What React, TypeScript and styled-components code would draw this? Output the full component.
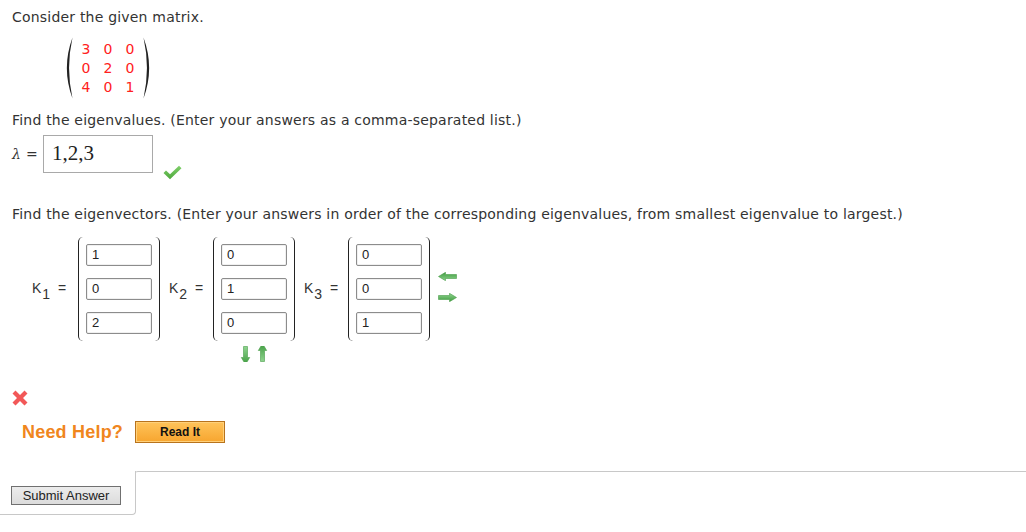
import React from "react";
import styled, { createGlobalStyle } from "styled-components";

const GlobalStyle = createGlobalStyle`
  html, body {
    margin: 0;
    padding: 0;
    background: #ffffff;
  }
  body {
    font-family: Verdana, "DejaVu Sans", sans-serif;
    font-size: 14px;
    letter-spacing: 0.2px;
    color: #333333;
  }
`;

const Page = styled.div`
  width: 1026px;
  height: 532px;
  overflow: hidden;
  position: relative;
`;

const Question = styled.div`
  padding: 9px 0 0 12px;
`;

const Prompt = styled.p<{ $top: number }>`
  margin: ${(p) => p.$top}px 0 0 0;
  line-height: 16px;
  white-space: nowrap;
`;

const MatrixWrap = styled.div`
  display: flex;
  align-items: stretch;
  margin: 12px 0 0 50px;
  height: 62px;
`;

const MatrixGrid = styled.div`
  display: grid;
  grid-template-columns: repeat(3, 22px);
  grid-auto-rows: 19px;
  align-content: center;
  padding: 0 1px;
`;

const Cell = styled.span`
  color: #ff2020;
  font-size: 14px;
  letter-spacing: 0;
  text-align: center;
  line-height: 19px;
`;

const AnswerRow = styled.div`
  display: flex;
  align-items: flex-end;
  margin-top: 7px;
`;

const Lambda = styled.span`
  font-family: "DejaVu Serif", "Liberation Serif", serif;
  font-style: italic;
  margin-right: 5px;
  line-height: 38px;
`;

const Eq = styled.span`
  margin-right: 5px;
  line-height: 38px;
`;

const BigInput = styled.div`
  width: 110px;
  height: 38px;
  box-sizing: border-box;
  border: 1px solid #a9a9a9;
  font-family: "Liberation Serif", "DejaVu Serif", serif;
  font-size: 21px;
  letter-spacing: 0;
  color: #222;
  line-height: 34px;
  padding-left: 8px;
`;

const CheckMark = styled.svg`
  margin: 0 0 -7px 10px;
`;

const VectorRow = styled.div`
  display: flex;
  align-items: flex-start;
  margin-top: 15px;
  padding-left: 20px;
`;

const VectorGroup = styled.div`
  display: flex;
  align-items: flex-start;
  margin-right: 9px;
`;

const KLabel = styled.span<{ $w: number }>`
  font-family: Arial, "Liberation Sans", sans-serif;
  font-size: 14px;
  letter-spacing: 0;
  width: ${(p) => p.$w}px;
  line-height: 102px;
  white-space: nowrap;
  color: #333;
  sub {
    font-size: 14px;
    vertical-align: -6px;
    line-height: 0;
    margin-left: 1px;
  }
`;

const VectorCol = styled.div`
  display: flex;
  flex-direction: column;
  align-items: center;
`;

const Bracketed = styled.div`
  display: flex;
  align-items: stretch;
  height: 104px;
`;

const Bracket = styled.span<{ $side: "left" | "right" }>`
  width: 4px;
  border-${(p) => p.$side}: 1.5px solid #222;
  border-radius: ${(p) => (p.$side === "left" ? "6px 0 0 6px" : "0 6px 6px 0")};
`;

const Cells = styled.div`
  display: flex;
  flex-direction: column;
  justify-content: space-between;
  padding: 7px 3px 7px;
`;

const SmallInput = styled.div`
  width: 66px;
  height: 22px;
  box-sizing: border-box;
  border: 1px solid #8c8c8c;
  border-radius: 2px;
  box-shadow: inset 0 0 0 1px #f0f0f0;
  font-family: Arial, "Liberation Sans", sans-serif;
  font-size: 13px;
  letter-spacing: 0;
  line-height: 20px;
  padding-left: 5px;
  color: #222;
`;

const SideArrows = styled.div`
  display: flex;
  flex-direction: column;
  gap: 12px;
  margin: 35px 0 0 8px;
`;

const UpDown = styled.div`
  display: flex;
  gap: 6px;
  margin-top: 5px;
`;

const Cross = styled.svg`
  display: block;
  margin: 28px 0 0 12px;
`;

const HelpRow = styled.div`
  display: flex;
  align-items: center;
  margin: 15px 0 0 22px;
`;

const NeedHelp = styled.span`
  font-family: Arial, "Liberation Sans", sans-serif;
  font-weight: bold;
  font-size: 18px;
  color: #f0861e;
  margin-right: 12px;
`;

const ReadIt = styled.button`
  width: 90px;
  height: 22px;
  background: linear-gradient(#ffc35a, #f7a52f);
  border: 1px solid #b8731c;
  box-shadow: inset 0 0 0 1px #ffd07a;
  font-family: Arial, "Liberation Sans", sans-serif;
  font-weight: bold;
  font-size: 12px;
  color: #111;
  padding: 0;
`;

const Footer = styled.div`
  position: absolute;
  left: 0;
  right: 0;
  top: 471px;
  display: flex;
`;

const FooterLeft = styled.div`
  width: 136px;
  height: 44px;
  box-sizing: border-box;
  border-right: 1px solid #c8c8c8;
  border-bottom: 1px solid #c8c8c8;
  border-bottom-right-radius: 4px;
  padding: 15px 0 0 11px;
`;

const FooterRight = styled.div`
  flex: 1;
  border-top: 1px solid #c8c8c8;
  border-top-left-radius: 3px;
  margin-left: -1px;
`;

const SubmitButton = styled.button`
  width: 110px;
  height: 19px;
  padding: 0;
  background: linear-gradient(#ececec, #dcdcdc);
  border: 1px solid #707070;
  font-family: Arial, "Liberation Sans", sans-serif;
  font-size: 13px;
  color: #222;
  line-height: 17px;
`;

const Paren = ({ side }: { side: "left" | "right" }) => (
  <svg width="12" height="62" viewBox="0 0 12 62">
    {side === "left" ? (
      <path d="M10.5 0.5 Q-0.8 31 10.5 61.5 Q3.6 31 10.5 0.5 Z" fill="#222" />
    ) : (
      <path d="M1.5 0.5 Q12.8 31 1.5 61.5 Q8.4 31 1.5 0.5 Z" fill="#222" />
    )}
  </svg>
);

const Arrow = ({ dir }: { dir: "left" | "right" | "up" | "down" }) => {
  const horiz = dir === "left" || dir === "right";
  const rot = { right: 0, down: 90, left: 180, up: 270 }[dir];
  return (
    <svg width={horiz ? 19 : 11} height={horiz ? 9 : 16} viewBox={horiz ? "0 0 19 9" : "0 0 11 16"}>
      <defs>
        <linearGradient id={`g-${dir}`} x1="0" y1="0" x2={horiz ? "0" : "1"} y2={horiz ? "1" : "0"}>
          <stop offset="0" stopColor="#8fd48f" />
          <stop offset="1" stopColor="#3f9b3f" />
        </linearGradient>
      </defs>
      <g transform={horiz ? `rotate(${rot} 9.5 4.5)` : `translate(5.5 8) rotate(${rot}) translate(-8 -4.5)`}>
        <path d="M0.5 2.5 H11.5 V0.3 L18.5 4.5 L11.5 8.7 V6.5 H0.5 Z" fill={`url(#g-${dir})`} stroke="#4a9e4a" strokeWidth="0.6" />
      </g>
    </svg>
  );
};

const vectors = [
  { label: "1", values: ["1", "0", "2"], w: 46 },
  { label: "2", values: ["0", "1", "0"], w: 44 },
  { label: "3", values: ["0", "0", "1"], w: 44 },
];

export default function App() {
  return (
    <Page>
      <GlobalStyle />
      <Question>
        <Prompt $top={0}>Consider the given matrix.</Prompt>
        <MatrixWrap>
          <Paren side="left" />
          <MatrixGrid>
            {["3", "0", "0", "0", "2", "0", "4", "0", "1"].map((v, i) => (
              <Cell key={i}>{v}</Cell>
            ))}
          </MatrixGrid>
          <Paren side="right" />
        </MatrixWrap>
        <Prompt $top={13}>Find the eigenvalues. (Enter your answers as a comma-separated list.)</Prompt>
        <AnswerRow>
          <Lambda>λ</Lambda>
          <Eq>=</Eq>
          <BigInput>1,2,3</BigInput>
          <CheckMark width="19" height="15" viewBox="0 0 19 15">
            <defs>
              <linearGradient id="chk" x1="0" y1="0" x2="0" y2="1">
                <stop offset="0" stopColor="#7fcf6a" />
                <stop offset="1" stopColor="#4ea83c" />
              </linearGradient>
            </defs>
            <path d="M0.5 8 L3 5.5 L7 9.2 L16 0.8 L18.5 3.3 L7 14.3 Z" fill="url(#chk)" />
          </CheckMark>
        </AnswerRow>
        <Prompt $top={33}>
          Find the eigenvectors. (Enter your answers in order of the corresponding eigenvalues, from smallest
          eigenvalue to largest.)
        </Prompt>
        <VectorRow>
          {vectors.map((v, idx) => (
            <VectorGroup key={v.label}>
              <KLabel $w={v.w}>
                K<sub>{v.label}</sub>&nbsp;&nbsp;=
              </KLabel>
              <VectorCol>
                <Bracketed>
                  <Bracket $side="left" />
                  <Cells>
                    {v.values.map((c, i) => (
                      <SmallInput key={i}>{c}</SmallInput>
                    ))}
                  </Cells>
                  <Bracket $side="right" />
                </Bracketed>
                {idx === 1 && (
                  <UpDown>
                    <Arrow dir="down" />
                    <Arrow dir="up" />
                  </UpDown>
                )}
              </VectorCol>
              {idx === 2 && (
                <SideArrows>
                  <Arrow dir="left" />
                  <Arrow dir="right" />
                </SideArrows>
              )}
            </VectorGroup>
          ))}
        </VectorRow>
      </Question>
      <Cross width="16" height="16" viewBox="0 0 16 16">
        <path d="M0.5 3.5 L3.5 0.5 L8 5 L12.5 0.5 L15.5 3.5 L11 8 L15.5 12.5 L12.5 15.5 L8 11 L3.5 15.5 L0.5 12.5 L5 8 Z" fill="#f25858" />
      </Cross>
      <HelpRow>
        <NeedHelp>Need Help?</NeedHelp>
        <ReadIt>Read It</ReadIt>
      </HelpRow>
      <Footer>
        <FooterLeft>
          <SubmitButton>Submit Answer</SubmitButton>
        </FooterLeft>
        <FooterRight />
      </Footer>
    </Page>
  );
}
